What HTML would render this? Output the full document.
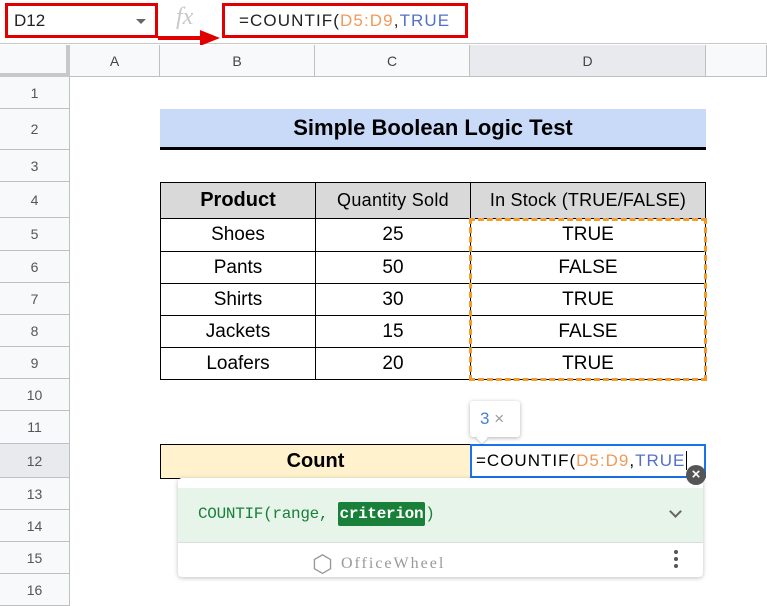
<!DOCTYPE html>
<html><head><style>
*{margin:0;padding:0;box-sizing:border-box}
body{width:767px;height:606px;overflow:hidden;background:#fff;font-family:"Liberation Sans",sans-serif;position:relative}
.a{position:absolute}
.ch{position:absolute;top:45px;height:32px;background:#f8f9fa;border-right:1px solid #c0c0c0;border-bottom:1px solid #c0c0c0;font-size:14px;color:#444;display:flex;align-items:center;justify-content:center}
.rh{position:absolute;left:0;width:70px;background:#f8f9fa;border-bottom:1px solid #c0c0c0;border-right:1px solid #c0c0c0;font-size:14px;color:#555;display:flex;align-items:center;justify-content:center}
.c{position:absolute;display:flex;align-items:center;justify-content:center;font-size:19px;color:#000;border:1px solid #000}
.mono{font-family:"Liberation Mono",monospace}
</style></head><body>
<div class="a" style="left:0;top:0;width:767px;height:44px;background:#fff;border-bottom:1px solid #c8c8c8"></div>
<div class="a" style="left:5px;top:3px;width:153px;height:35px;border:3px solid #e00000;font-size:17px;padding:5px 0 0 6px;color:#222">D12</div>
<div class="a" style="left:136px;top:19px;width:0;height:0;border-left:5px solid transparent;border-right:5px solid transparent;border-top:5px solid #666"></div>
<div class="a" style="left:176px;top:4px;font-family:'Liberation Serif',serif;font-style:italic;font-size:24px;color:#c8c8c8">fx</div>
<div class="a" style="left:222px;top:3px;width:246px;height:35px;border:3px solid #e00000;font-size:17px;padding:5px 0 0 14px;letter-spacing:1.1px"><span style="color:#222">=COUNTIF(</span><span style="color:#f09a5a">D5:D9</span><span style="color:#222">,</span><span style="color:#5470c8">TRUE</span></div>
<div class="a" style="left:158px;top:36px;width:45px;height:4px;background:#e00000"></div>
<div class="a" style="left:200px;top:30px;width:0;height:0;border-top:8px solid transparent;border-bottom:8px solid transparent;border-left:20px solid #e00000"></div>
<div class="a" style="left:0;top:45px;width:70px;height:32px;background:#f8f9fa;border-right:4px solid #c8c8c8;border-bottom:4px solid #c8c8c8"></div>
<div class="ch" style="left:70px;width:90px">A</div>
<div class="ch" style="left:160px;width:155px">B</div>
<div class="ch" style="left:315px;width:155px">C</div>
<div class="ch" style="left:470px;width:236px;background:#e8eaed">D</div>
<div class="ch" style="left:706px;width:61px"></div>
<div class="rh" style="top:77px;height:32px">1</div>
<div class="rh" style="top:109px;height:41px">2</div>
<div class="rh" style="top:150px;height:32px">3</div>
<div class="rh" style="top:182px;height:36px">4</div>
<div class="rh" style="top:218px;height:33px">5</div>
<div class="rh" style="top:251px;height:32px">6</div>
<div class="rh" style="top:283px;height:32px">7</div>
<div class="rh" style="top:315px;height:32px">8</div>
<div class="rh" style="top:347px;height:32px">9</div>
<div class="rh" style="top:379px;height:32px">10</div>
<div class="rh" style="top:411px;height:33px">11</div>
<div class="rh" style="top:444px;height:34px;background:#e8eaed">12</div>
<div class="rh" style="top:478px;height:32px">13</div>
<div class="rh" style="top:510px;height:32px">14</div>
<div class="rh" style="top:542px;height:32px">15</div>
<div class="rh" style="top:574px;height:32px">16</div>
<div class="a" style="left:160px;top:109px;width:546px;height:41px;background:#c9daf8;border-bottom:3px solid #000;display:flex;align-items:center;justify-content:center;font-weight:bold;font-size:22px">Simple Boolean Logic Test</div>
<div class="c" style="left:160px;top:182px;width:156px;height:37px;background:#d9d9d9;font-weight:bold;font-size:20px">Product</div>
<div class="c" style="left:315px;top:182px;width:156px;height:37px;background:#d9d9d9;font-size:18px;letter-spacing:0.3px">Quantity Sold</div>
<div class="c" style="left:470px;top:182px;width:236px;height:37px;background:#d9d9d9;font-size:18px;letter-spacing:0.2px">In Stock (TRUE/FALSE)</div>
<div class="c" style="left:160px;top:218px;width:156px;height:34px">Shoes</div>
<div class="c" style="left:315px;top:218px;width:156px;height:34px">25</div>
<div class="c" style="left:470px;top:218px;width:236px;height:34px">TRUE</div>
<div class="c" style="left:160px;top:251px;width:156px;height:33px">Pants</div>
<div class="c" style="left:315px;top:251px;width:156px;height:33px">50</div>
<div class="c" style="left:470px;top:251px;width:236px;height:33px">FALSE</div>
<div class="c" style="left:160px;top:283px;width:156px;height:33px">Shirts</div>
<div class="c" style="left:315px;top:283px;width:156px;height:33px">30</div>
<div class="c" style="left:470px;top:283px;width:236px;height:33px">TRUE</div>
<div class="c" style="left:160px;top:315px;width:156px;height:33px">Jackets</div>
<div class="c" style="left:315px;top:315px;width:156px;height:33px">15</div>
<div class="c" style="left:470px;top:315px;width:236px;height:33px">FALSE</div>
<div class="c" style="left:160px;top:347px;width:156px;height:33px">Loafers</div>
<div class="c" style="left:315px;top:347px;width:156px;height:33px">20</div>
<div class="c" style="left:470px;top:347px;width:236px;height:33px">TRUE</div>
<div class="a" style="left:469px;top:218px;width:238px;height:163px;border:3px dashed #f29b2a"></div>
<div class="c" style="left:160px;top:444px;width:311px;height:35px;background:#fff2cc;font-weight:bold;font-size:20px">Count</div>
<div class="a" style="left:470px;top:444px;width:236px;height:34px;border:2px solid #1a73e8;background:#fff;font-size:17px;padding:5px 0 0 4px;letter-spacing:1px"><span>=COUNTIF(</span><span style="color:#f09a5a">D5:D9</span>,<span style="color:#5470c8">TRUE</span><span style="border-left:1.5px solid #000;margin-left:1px"></span></div>
<div class="a" style="left:470px;top:401px;width:50px;height:36px;background:#fff;box-shadow:0 1px 4px rgba(0,0,0,.3);border-radius:3px;font-size:17px;padding:8px 0 0 10px"><span style="color:#4a7fd8">3</span> <span style="color:#999">×</span></div>
<div class="a" style="left:478px;top:434px;width:8px;height:8px;background:#fff;transform:rotate(45deg);box-shadow:1px 1px 2px rgba(0,0,0,.2)"></div>
<div class="a" style="left:178px;top:478px;width:525px;height:99px;background:#fff;box-shadow:0 1px 5px rgba(0,0,0,.25);border-radius:4px;overflow:hidden">
 <div class="a" style="left:0;top:10px;width:525px;height:55px;background:#e6f4ea;border-bottom:1px solid #ddd"></div>
 <div class="a mono" style="left:20px;top:27px;font-size:16px;color:#188038;letter-spacing:-0.3px">COUNTIF(range, <span style="background:#188038;color:#fff;font-weight:bold;padding:3px 2px;border-radius:2px">criterion</span>)</div>
 <div class="a" style="left:493px;top:29px;width:9px;height:9px;border-right:2px solid #666;border-bottom:2px solid #666;transform:rotate(45deg)"></div>
 <div class="a" style="left:496px;top:72px;width:4px;height:4px;border-radius:2px;background:#555;box-shadow:0 7px 0 #555,0 14px 0 #555"></div>
 <div class="a" style="left:134px;top:72px;font-family:'Liberation Serif',serif;font-size:16px;letter-spacing:2px;color:#999"><span style="font-size:24px;vertical-align:middle">⬡</span> OfficeWheel</div>
</div>
<div class="a" style="left:686px;top:465px;width:20px;height:20px;border-radius:10px;background:#555;color:#fff;font-size:15px;font-weight:bold;text-align:center;line-height:20px">×</div>
</body></html>
